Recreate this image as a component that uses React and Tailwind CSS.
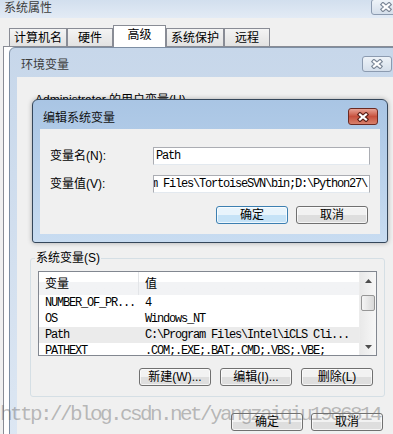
import React from "react";

const SANS = "font-['Liberation_Sans','Noto_Sans_CJK_SC',sans-serif]";
const MONO = "font-['Liberation_Mono','Noto_Sans_CJK_SC',monospace] text-[12px] tracking-[-1.2px]";

function XGlyph({ outline, fill }) {
  const d = "M4 2.5 L10 7.5 M10 2.5 L4 7.5";
  return (
    <svg width="14" height="10" viewBox="0 0 14 10">
      <path d={d} stroke={outline} strokeWidth="4.4" strokeLinecap="square" fill="none" />
      <path d={d} stroke={fill} strokeWidth="2.2" strokeLinecap="square" fill="none" />
    </svg>
  );
}

function CloseBox({ className }) {
  return (
    <div
      className={`${className} shrink-0 rounded-[3px] border border-[#8c9bb0] bg-linear-to-b from-[#eef3f8] to-[#d5dfeb] flex items-center justify-center`}
    >
      <XGlyph outline="#7b8797" fill="#ffffff" />
    </div>
  );
}

function RedClose({ className }) {
  return (
    <div
      className={`${className} shrink-0 rounded-[3px] border border-[#6b2a22] bg-linear-to-b from-[#e6a396] via-[#c6503d] to-[#d8806b] flex items-center justify-center`}
    >
      <XGlyph outline="#5c2119" fill="#ffffff" />
    </div>
  );
}

function Btn({ children, focused }) {
  return (
    <div
      className={
        focused
          ? "w-[72px] h-[18px] shrink-0 rounded-[3px] border border-[#3c7fb1] bg-linear-to-b from-[#e8f4fc] from-50% to-[#c6e3f7] to-50% flex items-center justify-center shadow-[inset_0_0_0_1px_rgba(255,255,255,0.7)]"
          : "w-[72px] h-[18px] shrink-0 rounded-[3px] border border-[#707070] bg-linear-to-b from-[#f2f2f2] from-50% to-[#dedede] to-50% flex items-center justify-center shadow-[inset_0_0_0_1px_rgba(255,255,255,0.7)]"
      }
    >
      {children}
    </div>
  );
}

function Tab({ w, children }) {
  return (
    <div
      className={`${w} h-[18px] border border-b-0 border-[#898c95] bg-linear-to-b from-[#f4f4f4] to-[#e2e2e2] flex items-center justify-center`}
    >
      {children}
    </div>
  );
}

const rows = [
  ["NUMBER_OF_PR...", "4", false],
  ["OS", "Windows_NT", false],
  ["Path", "C:\\Program Files\\Intel\\iCLS Cli...", true],
  ["PATHEXT", ".COM;.EXE;.BAT;.CMD;.VBS;.VBE;", false],
];

export default function App() {
  return (
    <div
      className={`relative w-[393px] h-[434px] overflow-hidden bg-[#f0f0f0] text-[12px] leading-[14px] text-black ${SANS}`}
    >
      {/* 系统属性 */}
      <div className="absolute left-0 top-0 w-[420px] h-[434px] flex flex-col">
        <div className="h-[18px] shrink-0 flex items-start bg-linear-to-b from-[#d2dfee] to-[#e3ebf5]">
          <span className="ml-[4px] mt-[1px] text-[#3c3c3c]">系统属性</span>
          <CloseBox className="ml-auto mr-[19px] -mt-px w-[30px] h-[16px]" />
        </div>
        <div className="flex-1 flex flex-col pt-[7px]">
          <div className="flex items-end h-[21px] pl-[9px]">
            <Tab w="w-[58px]">计算机名</Tab>
            <Tab w="w-[46px]">硬件</Tab>
            <div className="relative z-10 w-[53px] h-[22px] -mb-px bg-white border border-b-0 border-[#898c95] flex justify-center pt-[2px]">
              高级
            </div>
            <Tab w="w-[58px]">系统保护</Tab>
            <Tab w="w-[46px]">远程</Tab>
          </div>
          <div className="flex-1 ml-[3px] border-l border-t border-[#898c95] bg-white" />
        </div>
      </div>

      {/* 环境变量 */}
      <div className="absolute left-[9px] top-[47px] w-[392px] h-[400px] rounded-t-[6px] border border-[#7d8ea3] bg-linear-to-b from-[#c7d7ea] to-[#dde7f3] flex flex-col">
        <div className="h-[29px] shrink-0 flex items-start">
          <span className="ml-[11px] mt-[10px] text-[#3c3c3c]">环境变量</span>
          <CloseBox className="ml-auto mr-[8px] mt-[8px] w-[30px] h-[16px]" />
        </div>
        <div className="flex-1 mx-[7px] bg-[#f0f0f0] flex flex-col">
          <div className="ml-[18px] mt-[16px] whitespace-nowrap">Administrator 的用户变量(U)</div>

          <fieldset className="ml-[13px] mt-[144px] w-[355px] border border-[#d5dfe5] rounded-[3px] px-[7px] pb-[10px]">
            <legend className="ml-[-3px] px-[1px]">系统变量(S)</legend>
            <div className="mt-[6px] h-[85px] border border-[#828790] bg-white flex overflow-hidden">
              <div className="flex-1 flex flex-col overflow-hidden">
                <div className="h-[23px] shrink-0 flex bg-linear-to-b from-white from-45% to-[#f2f3f5] to-45%">
                  <div className="w-[100px] border-r border-[#e3e5e8] pl-[6px] flex items-center">变量</div>
                  <div className="flex-1 pl-[6px] flex items-center">值</div>
                </div>
                {rows.map(([k, v, sel]) => (
                  <div
                    key={k}
                    className={`h-[16px] shrink-0 flex items-center whitespace-nowrap ${MONO} ${sel ? "bg-[#ebebeb]" : ""}`}
                  >
                    <div className="w-[100px] pl-[6px] overflow-hidden">{k}</div>
                    <div className="flex-1 pl-[6px] overflow-hidden">{v}</div>
                  </div>
                ))}
              </div>
              {/* scrollbar */}
              <div className="w-[17px] shrink-0 flex flex-col bg-linear-to-r from-[#e9e9e9] to-[#f7f7f7] border-l border-[#ececec]">
                <div className="h-[17px] shrink-0 flex items-center justify-center">
                  <svg width="7" height="4" viewBox="0 0 7 4">
                    <path d="M0 4 L3.5 0 L7 4 Z" fill="#4d4d4d" />
                  </svg>
                </div>
                <div className="flex-1 flex flex-col">
                  <div className="mt-[6px] mx-[1px] h-[16px] rounded-[2px] border border-[#969696] bg-linear-to-r from-[#f5f5f5] to-[#d9d9d9]" />
                </div>
                <div className="h-[17px] shrink-0 flex items-center justify-center">
                  <svg width="7" height="4" viewBox="0 0 7 4">
                    <path d="M0 0 L3.5 4 L7 0 Z" fill="#4d4d4d" />
                  </svg>
                </div>
              </div>
            </div>
            <div className="mt-[12px] flex justify-end gap-[9px] pr-[4px]">
              <Btn>新建(W)...</Btn>
              <Btn>编辑(I)...</Btn>
              <Btn>删除(L)</Btn>
            </div>
          </fieldset>

          <div className="mt-[16px] flex justify-end gap-[8px] pr-[10px]">
            <Btn>确定</Btn>
            <Btn>取消</Btn>
          </div>
        </div>
      </div>

      {/* 编辑系统变量 */}
      <div className="absolute left-[32px] top-[99px] w-[356px] h-[144px] rounded-t-[6px] rounded-b-[3px] border border-[#34465a] bg-linear-to-b from-[#a9c5e4] to-[#c8dcf1] flex flex-col shadow-[0_0_5px_rgba(0,0,0,0.3)]">
        <div className="h-[29px] shrink-0 flex items-start">
          <span className="ml-[10px] mt-[11px] text-[#111]">编辑系统变量</span>
          <RedClose className="ml-auto mr-[9px] mt-[8px] w-[30px] h-[17px]" />
        </div>
        <div className="h-[105px] mx-[7px] bg-[#f0f0f0] flex flex-col">
          <div className="mt-[18px] h-[18px] flex items-center">
            <div className="w-[113px] pl-[10px] whitespace-nowrap">变量名(N):</div>
            <div className={`w-[217px] h-[18px] border border-[#abadb3] border-b-[#e3e9ef] bg-white flex items-center pl-[2px] ${MONO}`}>
              Path
            </div>
          </div>
          <div className="mt-[10px] h-[18px] flex items-center">
            <div className="w-[113px] pl-[10px] whitespace-nowrap">变量值(V):</div>
            <div className={`w-[217px] h-[18px] border border-[#abadb3] border-b-[#e3e9ef] bg-white flex items-center justify-end pr-[2px] overflow-hidden whitespace-nowrap ${MONO}`}>
              {"ram Files\\TortoiseSVN\\bin;D:\\Python27\\"}
            </div>
          </div>
          <div className="mt-[13px] flex justify-end gap-[8px] pr-[12px]">
            <Btn focused>确定</Btn>
            <Btn>取消</Btn>
          </div>
        </div>
      </div>

      {/* watermark */}
      <div className="absolute left-0 top-[404px] z-50 pointer-events-none whitespace-nowrap font-['Liberation_Mono',monospace] text-[21px] leading-[21px] tracking-[-2.6px] text-[rgba(110,110,110,0.45)]">
        http://blog.csdn.net/yangzaiqiu1986814
      </div>
    </div>
  );
}
